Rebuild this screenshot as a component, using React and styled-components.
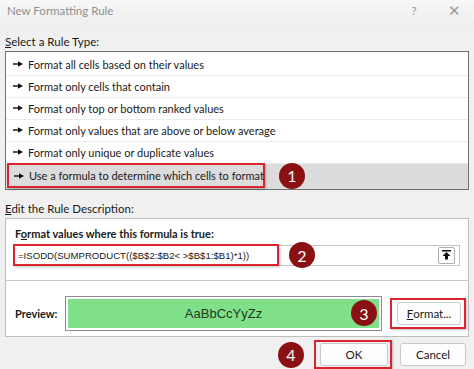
import React from 'react';
import styled, { createGlobalStyle } from 'styled-components';

const GlobalStyle = createGlobalStyle`
    html, body {
        margin: 0;
        padding: 0;
        background: #f0f0f0;
    }
    body {
        font-family: Lato, "Noto Sans", sans-serif;
        font-size: 11px;
        color: #1a1a1a;
        white-space: nowrap;
    }
`;

const RED = '#d9252d';

const Dialog = styled.div`
    width: 474px;
    height: 369px;
    background: #f0f0f0;
    overflow: hidden;
    display: flex;
    flex-direction: column;
`;

const TitleBar = styled.div`
    height: 29px;
    display: flex;
    align-items: center;
    padding: 0 0 7px 7px;
    box-sizing: border-box;
    background: linear-gradient(#f7f7f7, #ededed);
    color: #8f8f8f;
    font-size: 11.5px;
`;

const Title = styled.span`
    flex: 1;
`;

const TitleIcon = styled.span`
    width: 40px;
    text-align: center;
    color: #9a9a9a;
    font-size: ${p => p.$size || 12}px;
`;

const SectionLabel = styled.div`
    padding: ${p => p.$pad || '6px 5px 3px'};
    font-size: 11.5px;
`;

const ListBox = styled.div`
    margin: 0 5px;
    height: 140px;
    box-sizing: border-box;
    border: 1px solid #6f6f6f;
    background: #fff;
    padding-top: 2px;
`;

const RuleRow = styled.div`
    height: ${p => (p.$selected ? 24 : 21)}px;
    display: flex;
    align-items: center;
    padding-left: ${p => (p.$selected ? 1 : 7)}px;
    border-bottom: 1px solid ${p => (p.$last ? 'transparent' : '#ececec')};
    background: ${p => (p.$selected ? '#dcdcdc' : 'transparent')};
`;

const RuleText = styled.div`
    display: flex;
    align-items: center;
    gap: 4px;
    font-size: 11px;
`;

const Highlight = styled.div`
    display: flex;
    align-items: center;
    border: 2px solid ${RED};
    box-shadow: 1px 1px 2px rgba(0, 0, 0, 0.25);
    box-sizing: border-box;
    padding: ${p => p.$pad || '0'};
    height: ${p => p.$h}px;
    width: ${p => (p.$w ? `${p.$w}px` : 'auto')};
    margin-left: ${p => p.$ml || 0}px;
    flex: none;
`;

const Badge = styled.div`
    flex: none;
    width: 26px;
    height: 26px;
    border-radius: 50%;
    background: #8a1014;
    color: #fff;
    font-size: 16px;
    display: flex;
    align-items: center;
    justify-content: center;
    margin-left: ${p => p.$ml || 0}px;
    margin-right: ${p => p.$mr || 0}px;
    position: relative;
    z-index: 1;
`;

const DescBox = styled.div`
    margin: 0 5px;
    height: 120px;
    box-sizing: border-box;
    border: 1px solid #bdbdbd;
    background: #fff;
    display: flex;
    flex-direction: column;
`;

const FormulaArea = styled.div`
    padding: 8px 8px 0 7px;
    height: 62px;
    box-sizing: border-box;
    border-bottom: 1px solid #c8c8c8;
`;

const BoldLabel = styled.div`
    font-weight: 700;
    font-size: 11px;
    padding-left: 2px;
    margin-bottom: 5px;
`;

const FormulaInput = styled.div`
    height: 21px;
    border: 1px solid #c4c4c4;
    display: flex;
    align-items: center;
    box-sizing: border-box;
`;

const FormulaText = styled.span`
    font-family: "Liberation Sans", Arial, sans-serif;
    font-size: 9.6px;
    padding-left: 3px;
`;

const CollapseButton = styled.div`
    margin-left: auto;
    margin-right: 4px;
    width: 15px;
    height: 15px;
    border: 1px solid #adadad;
    border-radius: 2px;
    display: flex;
    align-items: center;
    justify-content: center;
    background: #fdfdfd;
`;

const PreviewArea = styled.div`
    flex: 1;
    display: flex;
    align-items: center;
    padding: 10px 0 0 9px;
`;

const PreviewLabel = styled.div`
    font-weight: 700;
    width: 50px;
`;

const PreviewSwatch = styled.div`
    width: 317px;
    height: 35px;
    flex: none;
    box-sizing: border-box;
    border: 1px solid #8c8c8c;
    box-shadow: inset 0 0 0 2px #fff;
    background: #80e08a;
    display: flex;
    align-items: center;
    justify-content: center;
    font-family: "Liberation Sans", Arial, sans-serif;
    font-size: 13px;
    color: #1c3a1c;
`;

const Button = styled.div`
    width: ${p => p.$w || 64}px;
    height: 23px;
    flex: none;
    box-sizing: border-box;
    border: 1px solid #c9c9c9;
    border-radius: 3px;
    background: #fdfdfd;
    display: flex;
    align-items: center;
    justify-content: center;
    font-size: 11.5px;
`;

const ButtonRow = styled.div`
    flex: 1;
    display: flex;
    align-items: center;
    justify-content: flex-end;
    padding: 3px 8px 0 0;
`;

const U = styled.span`
    text-decoration: underline;
`;

function Arrow() {
    return (
        <svg width="11" height="8" viewBox="0 0 11 8">
            <rect x="0" y="3.3" width="6" height="1.4" fill="#111" />
            <path d="M5 1.2 L10 4 L5 6.8 Z" fill="#111" />
        </svg>
    );
}

const RULES = [
    'Format all cells based on their values',
    'Format only cells that contain',
    'Format only top or bottom ranked values',
    'Format only values that are above or below average',
    'Format only unique or duplicate values',
];

export default function App() {
    return (
        <Dialog>
            <GlobalStyle />
            <TitleBar>
                <Title>New Formatting Rule</Title>
                <TitleIcon $size={12}>?</TitleIcon>
                <TitleIcon $size={15}>✕</TitleIcon>
            </TitleBar>

            <SectionLabel><U>S</U>elect a Rule Type:</SectionLabel>
            <ListBox>
                {RULES.map((r) => (
                    <RuleRow key={r}>
                        <RuleText><Arrow />{r}</RuleText>
                    </RuleRow>
                ))}
                <RuleRow $selected $last>
                    <Highlight $h={25} $w={258} $pad="0 0 0 5px">
                        <RuleText><Arrow />Use a formula to determine which cells to format</RuleText>
                    </Highlight>
                    <Badge $ml={14}>1</Badge>
                </RuleRow>
            </ListBox>

            <SectionLabel $pad="12px 5px 3px"><U>E</U>dit the Rule Description:</SectionLabel>
            <DescBox>
                <FormulaArea>
                    <BoldLabel>F<U>o</U>rmat values where this formula is true:</BoldLabel>
                    <FormulaInput>
                        <Highlight $h={22} $w={266} $ml={-1}>
                            <FormulaText>=ISODD(SUMPRODUCT(($B$2:$B2&lt; &gt;$B$1:$B1)*1))</FormulaText>
                        </Highlight>
                        <Badge $ml={10}>2</Badge>
                        <CollapseButton>
                            <svg width="9" height="10" viewBox="0 0 9 10">
                                <rect x="0" y="0" width="9" height="1.5" fill="#111" />
                                <path d="M4.5 2 L8.5 6 L6 6 L6 9.5 L3 9.5 L3 6 L0.5 6 Z" fill="#111" />
                            </svg>
                        </CollapseButton>
                    </FormulaInput>
                </FormulaArea>
                <PreviewArea>
                    <PreviewLabel>Preview:</PreviewLabel>
                    <PreviewSwatch>AaBbCcYyZz</PreviewSwatch>
                    <Badge $ml={-31} $mr={13}>3</Badge>
                    <Highlight $h={31} $w={76} $pad="0 0 0 5px">
                        <Button $w={64}><U>F</U>ormat...</Button>
                    </Highlight>
                </PreviewArea>
            </DescBox>

            <ButtonRow>
                <Badge $mr={10}>4</Badge>
                <Highlight $h={29} $w={78} $pad="0 0 0 4px">
                    <Button $w={68}>OK</Button>
                </Highlight>
                <Button $w={66} style={{ marginLeft: 8 }}>Cancel</Button>
            </ButtonRow>
        </Dialog>
    );
}
